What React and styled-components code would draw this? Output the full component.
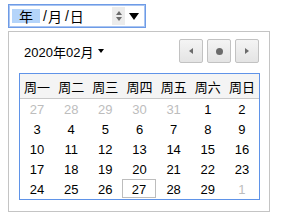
import React from "react";
import styled, { createGlobalStyle } from "styled-components";

const Global = createGlobalStyle`
	body {
		margin: 0;
		background: #fff;
		font-family: "Liberation Sans", "Noto Sans CJK SC", sans-serif;
		color: #000;
	}
`;

const Page = styled.div`
	padding: 4px 0 0 8px;
	display: flex;
	flex-direction: column;
	align-items: flex-start;
	gap: 3px;
`;

const DateInput = styled.div`
	box-sizing: border-box;
	width: 138px;
	height: 24px;
	border: 1px solid #6e9be6;
	box-shadow: inset 0 0 0 1px #a9c5f2;
	display: flex;
	align-items: center;
	padding: 0 6px 0 3px;
	font-size: 14px;
`;

const Segment = styled.span`
	display: inline-block;
	box-sizing: border-box;
	width: ${(p) => (p.$wide ? "28px" : "auto")};
	height: 14px;
	line-height: 14px;
	text-align: center;
	background: ${(p) => (p.$active ? "#b4d4fa" : "transparent")};
	font-family: "Noto Sans CJK SC", sans-serif;
	font-size: 14px;
`;

const Sep = styled.span`
	margin: 0 1px 0 3px;
	font-size: 14px;
`;

const Spinner = styled.div`
	margin-left: auto;
	width: 13px;
	height: 18px;
	background: #ececec;
	display: flex;
	flex-direction: column;
	align-items: center;
	justify-content: center;
	gap: 2px;
`;

const Tri = styled.span`
	width: 0;
	height: 0;
	border-left: 3.5px solid transparent;
	border-right: 3.5px solid transparent;
	${(p) =>
		p.$down
			? `border-top: 4px solid ${p.$color || "#6b6b6b"};`
			: `border-bottom: 4px solid ${p.$color || "#6b6b6b"};`}
`;

const DropArrow = styled.span`
	margin-left: 4px;
	width: 0;
	height: 0;
	border-left: 5px solid transparent;
	border-right: 5px solid transparent;
	border-top: 7px solid #000;
`;

const Popup = styled.div`
	box-sizing: border-box;
	width: 262px;
	height: 181px;
	border: 1px solid #c4c4c4;
	padding: 7px 10px 11px 10px;
	display: flex;
	flex-direction: column;
`;

const Header = styled.div`
	height: 24px;
	display: flex;
	align-items: center;
	margin-bottom: 10px;
`;

const MonthLabel = styled.div`
	padding-left: 5px;
	font-size: 13px;
	display: flex;
	align-items: center;
	gap: 5px;
`;

const NavGroup = styled.div`
	margin-left: auto;
	display: flex;
	gap: 4px;
`;

const NavButton = styled.button`
	box-sizing: border-box;
	width: 24px;
	height: 24px;
	padding: 0;
	border: 1px solid #c2c2c2;
	border-radius: 2px;
	background: linear-gradient(#f4f4f4, #e4e4e4);
	display: flex;
	align-items: center;
	justify-content: center;
`;

const SideTri = styled.span`
	width: 0;
	height: 0;
	border-top: 3.5px solid transparent;
	border-bottom: 3.5px solid transparent;
	${(p) =>
		p.$left ? "border-right: 4px solid #6b6b6b;" : "border-left: 4px solid #6b6b6b;"}
`;

const Dot = styled.span`
	width: 7px;
	height: 7px;
	border-radius: 50%;
	background: #6b6b6b;
`;

const Table = styled.div`
	box-sizing: border-box;
	width: 241px;
	height: 127px;
	border: 1px solid #5f93e8;
`;

const HeadRow = styled.div`
	display: grid;
	grid-template-columns: repeat(7, 1fr);
	height: 24px;
	background: #f4f4f4;
	border-bottom: 1px solid #c8c8c8;
`;

const HeadCell = styled.div`
	display: flex;
	align-items: center;
	justify-content: center;
	font-family: "Noto Sans CJK SC", sans-serif;
	font-size: 13px;
`;

const Grid = styled.div`
	display: grid;
	grid-template-columns: repeat(7, 1fr);
	grid-auto-rows: 20px;
`;

const Day = styled.div`
	box-sizing: border-box;
	display: flex;
	align-items: center;
	justify-content: center;
	font-size: 13px;
	color: ${(p) => (p.$other ? "#bdbdbd" : "#000")};
	${(p) =>
		p.$today &&
		`border: 1px solid #bdbdbd; margin: 0 1px 1px 0; padding-top: 1px;`}
`;

const weekdays = ["周一", "周二", "周三", "周四", "周五", "周六", "周日"];

const days = [
	...[27, 28, 29, 30, 31].map((d) => ({ d, other: true })),
	...Array.from({ length: 29 }, (_, i) => ({ d: i + 1 })),
	{ d: 1, other: true },
];

export default function App() {
	return (
		<>
			<Global />
			<Page>
				<DateInput>
					<Segment $active $wide>年</Segment>
					<Sep>/</Sep>
					<Segment>月</Segment>
					<Sep>/</Sep>
					<Segment>日</Segment>
					<Spinner>
						<Tri />
						<Tri $down />
					</Spinner>
					<DropArrow />
				</DateInput>
				<Popup>
					<Header>
						<MonthLabel>
							2020年02月
							<Tri $down $color="#000" />
						</MonthLabel>
						<NavGroup>
							<NavButton>
								<SideTri $left />
							</NavButton>
							<NavButton>
								<Dot />
							</NavButton>
							<NavButton>
								<SideTri />
							</NavButton>
						</NavGroup>
					</Header>
					<Table>
						<HeadRow>
							{weekdays.map((w) => (
								<HeadCell key={w}>{w}</HeadCell>
							))}
						</HeadRow>
						<Grid>
							{days.map((x, i) => (
								<Day key={i} $other={x.other} $today={!x.other && x.d === 27}>
									{x.d}
								</Day>
							))}
						</Grid>
					</Table>
				</Popup>
			</Page>
		</>
	);
}
